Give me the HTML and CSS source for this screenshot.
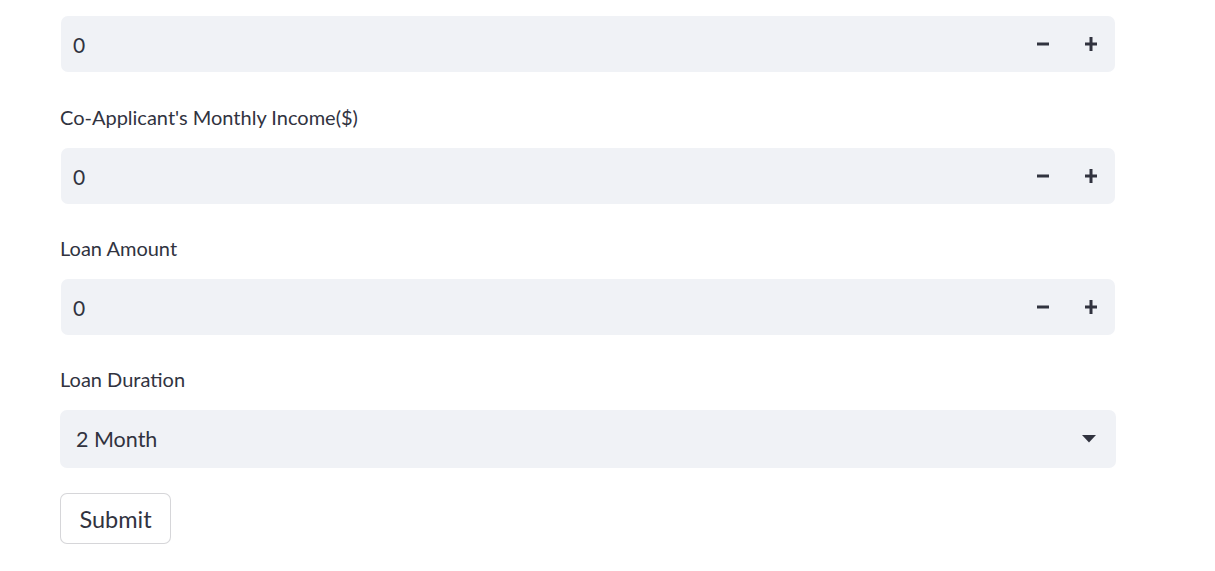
FILE: index.html
```html
<!DOCTYPE html>
<html>
<head>
<meta charset="utf-8">
<link rel="stylesheet" href="styles.css">
</head>
<body>
<main class="form">
  <div class="field field-first">
    <div class="number-input">
      <span class="value">0</span>
      <div class="steppers">
        <button class="step" aria-label="minus"><svg width="14" height="14" viewBox="0 0 14 14"><rect x="1" y="5.5" width="12" height="3" fill="#31333f"/></svg></button>
        <button class="step" aria-label="plus"><svg width="14" height="14" viewBox="0 0 14 14"><rect x="1" y="5.5" width="12" height="3" fill="#31333f"/><rect x="5.5" y="0" width="3" height="14" fill="#31333f"/></svg></button>
      </div>
    </div>
  </div>
  <div class="field">
    <label class="label">Co-Applicant's Monthly Income($)</label>
    <div class="number-input">
      <span class="value">0</span>
      <div class="steppers">
        <button class="step" aria-label="minus"><svg width="14" height="14" viewBox="0 0 14 14"><rect x="1" y="5.5" width="12" height="3" fill="#31333f"/></svg></button>
        <button class="step" aria-label="plus"><svg width="14" height="14" viewBox="0 0 14 14"><rect x="1" y="5.5" width="12" height="3" fill="#31333f"/><rect x="5.5" y="0" width="3" height="14" fill="#31333f"/></svg></button>
      </div>
    </div>
  </div>
  <div class="field">
    <label class="label">Loan Amount</label>
    <div class="number-input">
      <span class="value">0</span>
      <div class="steppers">
        <button class="step" aria-label="minus"><svg width="14" height="14" viewBox="0 0 14 14"><rect x="1" y="5.5" width="12" height="3" fill="#31333f"/></svg></button>
        <button class="step" aria-label="plus"><svg width="14" height="14" viewBox="0 0 14 14"><rect x="1" y="5.5" width="12" height="3" fill="#31333f"/><rect x="5.5" y="0" width="3" height="14" fill="#31333f"/></svg></button>
      </div>
    </div>
  </div>
  <div class="field field-select">
    <label class="label">Loan Duration</label>
    <div class="select">
      <span class="select-value">2 Month</span>
      <svg class="caret" width="14" height="8" viewBox="0 0 14 8"><path d="M0 0 H14 L7 7.5 Z" fill="#31333f"/></svg>
    </div>
  </div>
  <button class="submit">Submit</button>
</main>
</body>
</html>
```
FILE: styles.css
```css
* { box-sizing: border-box; }
html, body { margin: 0; padding: 0; background: #ffffff; }
body {
  font-family: "Lato", "Noto Sans", sans-serif;
  color: #31333f;
  width: 1215px;
  height: 571px;
  overflow: hidden;
}
.form {
  display: flex;
  flex-direction: column;
  padding: 16px 0 0 60px;
  width: 1116px;
}
.field {
  display: flex;
  flex-direction: column;
  margin-bottom: 32px;
}
.field-first { margin-bottom: 33px; }
.field-select { margin-bottom: 25px; }
.label {
  font-size: 20px;
  line-height: 24px;
  height: 24px;
  margin-bottom: 19px;
  color: #31333f;
}
.number-input {
  height: 56px;
  margin: 0 1px;
  background: #f0f2f6;
  border-radius: 7px;
  display: flex;
  align-items: center;
  padding-left: 12px;
}
.value {
  flex: 1;
  font-size: 21px;
}
.steppers {
  display: flex;
  height: 100%;
}
.step {
  width: 48px;
  height: 100%;
  border: none;
  background: transparent;
  padding: 0;
  display: flex;
  align-items: center;
  justify-content: center;
}
.step svg { display: block; }
.select {
  height: 58px;
  background: #f0f2f6;
  border-radius: 7px;
  display: flex;
  align-items: center;
  padding: 0 20px 0 16px;
}
.select-value {
  flex: 1;
  font-size: 21.5px;
}
.caret { display: block; }
.submit {
  align-self: flex-start;
  width: 111px;
  height: 51px;
  background: #ffffff;
  border: 1px solid rgba(49, 51, 63, 0.2);
  border-radius: 7px;
  font-family: inherit;
  font-size: 23.5px;
  color: #31333f;
  padding: 0;
}
```
